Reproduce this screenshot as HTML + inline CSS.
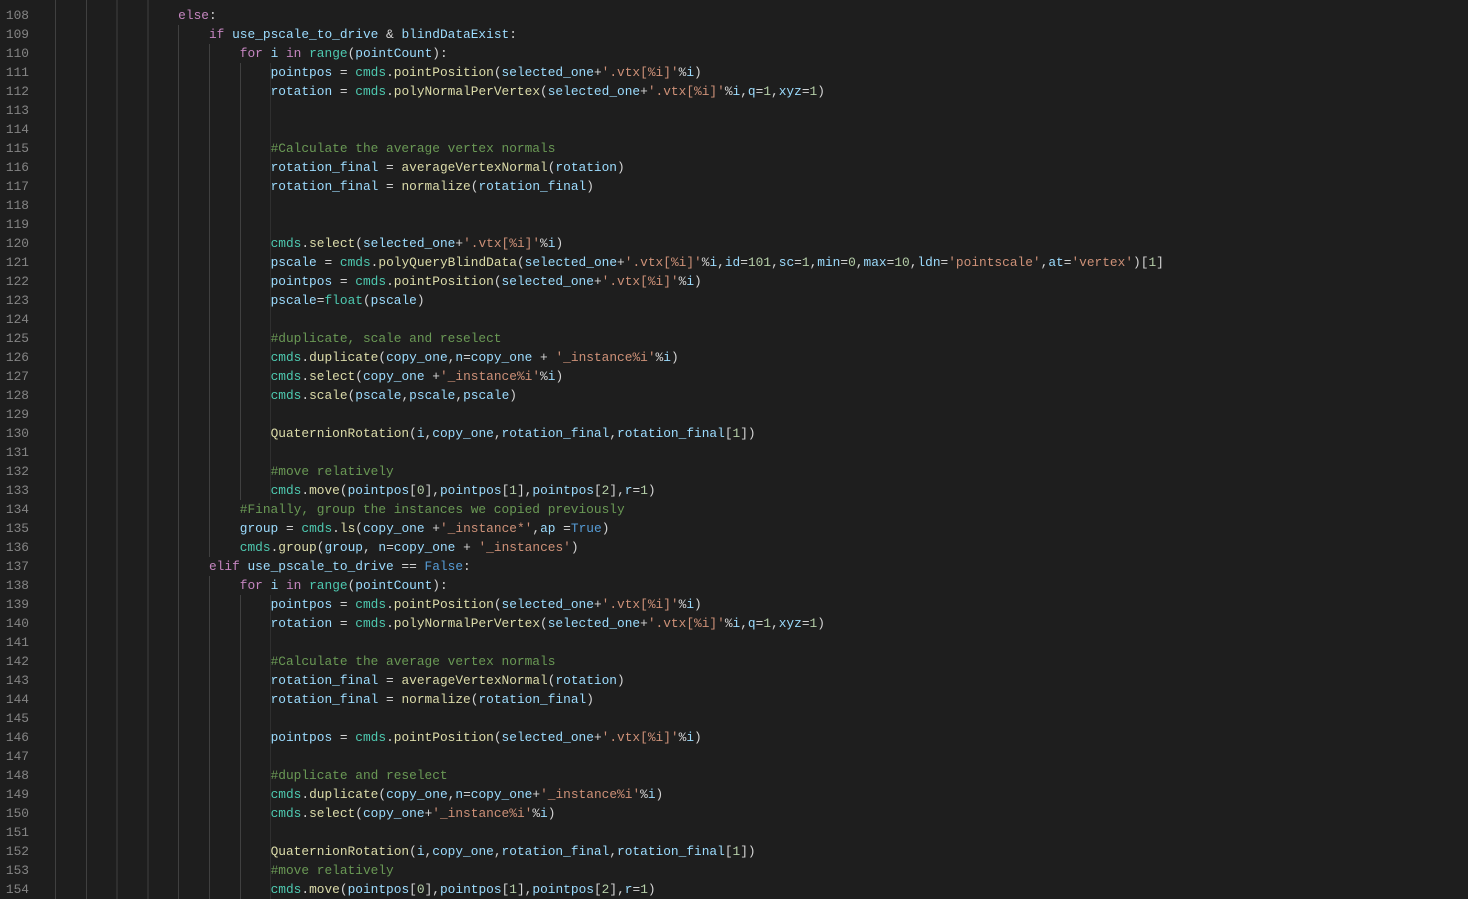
<!DOCTYPE html>
<html><head><meta charset="utf-8"><style>
html,body{margin:0;padding:0;background:#1e1e1e;width:1468px;height:897px;overflow:hidden}
.l{position:absolute;left:0;height:19px;width:1468px;font:12.833px/19px "Liberation Mono",monospace;color:#d4d4d4;white-space:pre}
.n{position:absolute;left:0;width:29px;text-align:right;color:#858585}
.g{position:absolute;left:55px;top:0;height:19px;background:repeating-linear-gradient(to right,#404040 0 1px,transparent 1px 30.8px)}
.c0{position:absolute;left:55px;top:0}
.k{color:#c586c0}.b{color:#569cd6}.t{color:#4ec9b0}.f{color:#dcdcaa}.v{color:#9cdcfe}.s{color:#ce9178}.m{color:#b5cea8}.c{color:#6a9955}
</style></head><body>
<script>
const L=[
[107,16,''],
[108,16,'<span class=k>else</span>:'],
[109,20,'<span class=k>if</span> <span class=v>use_pscale_to_drive</span> &amp; <span class=v>blindDataExist</span>:'],
[110,24,'<span class=k>for</span> <span class=v>i</span> <span class=k>in</span> <span class=t>range</span>(<span class=v>pointCount</span>):'],
[111,28,'P'],
[112,28,'R'],
[113,28,''],[114,28,''],
[115,28,'<span class=c>#Calculate the average vertex normals</span>'],
[116,28,'<span class=v>rotation_final</span> = <span class=f>averageVertexNormal</span>(<span class=v>rotation</span>)'],
[117,28,'<span class=v>rotation_final</span> = <span class=f>normalize</span>(<span class=v>rotation_final</span>)'],
[118,28,''],[119,28,''],
[120,28,'<span class=t>cmds</span>.<span class=f>select</span>(<span class=v>selected_one</span>+<span class=s>\'.vtx[%i]\'</span>%<span class=v>i</span>)'],
[121,28,'<span class=v>pscale</span> = <span class=t>cmds</span>.<span class=f>polyQueryBlindData</span>(<span class=v>selected_one</span>+<span class=s>\'.vtx[%i]\'</span>%<span class=v>i</span>,<span class=v>id</span>=<span class=m>101</span>,<span class=v>sc</span>=<span class=m>1</span>,<span class=v>min</span>=<span class=m>0</span>,<span class=v>max</span>=<span class=m>10</span>,<span class=v>ldn</span>=<span class=s>\'pointscale\'</span>,<span class=v>at</span>=<span class=s>\'vertex\'</span>)[<span class=m>1</span>]'],
[122,28,'P'],
[123,28,'<span class=v>pscale</span>=<span class=t>float</span>(<span class=v>pscale</span>)'],
[124,28,''],
[125,28,'<span class=c>#duplicate, scale and reselect</span>'],
[126,28,'<span class=t>cmds</span>.<span class=f>duplicate</span>(<span class=v>copy_one</span>,<span class=v>n</span>=<span class=v>copy_one</span> + <span class=s>\'_instance%i\'</span>%<span class=v>i</span>)'],
[127,28,'<span class=t>cmds</span>.<span class=f>select</span>(<span class=v>copy_one</span> +<span class=s>\'_instance%i\'</span>%<span class=v>i</span>)'],
[128,28,'<span class=t>cmds</span>.<span class=f>scale</span>(<span class=v>pscale</span>,<span class=v>pscale</span>,<span class=v>pscale</span>)'],
[129,28,''],
[130,28,'Q'],
[131,28,''],
[132,28,'<span class=c>#move relatively</span>'],
[133,28,'M'],
[134,24,'<span class=c>#Finally, group the instances we copied previously</span>'],
[135,24,'<span class=v>group</span> = <span class=t>cmds</span>.<span class=f>ls</span>(<span class=v>copy_one</span> +<span class=s>\'_instance*\'</span>,<span class=v>ap</span> =<span class=b>True</span>)'],
[136,24,'<span class=t>cmds</span>.<span class=f>group</span>(<span class=v>group</span>, <span class=v>n</span>=<span class=v>copy_one</span> + <span class=s>\'_instances\'</span>)'],
[137,20,'<span class=k>elif</span> <span class=v>use_pscale_to_drive</span> == <span class=b>False</span>:'],
[138,24,'<span class=k>for</span> <span class=v>i</span> <span class=k>in</span> <span class=t>range</span>(<span class=v>pointCount</span>):'],
[139,28,'P'],
[140,28,'R'],
[141,28,''],
[142,28,'<span class=c>#Calculate the average vertex normals</span>'],
[143,28,'<span class=v>rotation_final</span> = <span class=f>averageVertexNormal</span>(<span class=v>rotation</span>)'],
[144,28,'<span class=v>rotation_final</span> = <span class=f>normalize</span>(<span class=v>rotation_final</span>)'],
[145,28,''],
[146,28,'P'],
[147,28,''],
[148,28,'<span class=c>#duplicate and reselect</span>'],
[149,28,'<span class=t>cmds</span>.<span class=f>duplicate</span>(<span class=v>copy_one</span>,<span class=v>n</span>=<span class=v>copy_one</span>+<span class=s>\'_instance%i\'</span>%<span class=v>i</span>)'],
[150,28,'<span class=t>cmds</span>.<span class=f>select</span>(<span class=v>copy_one</span>+<span class=s>\'_instance%i\'</span>%<span class=v>i</span>)'],
[151,28,''],
[152,28,'Q'],
[153,28,'<span class=c>#move relatively</span>'],
[154,28,'M']
];
const T={
P:'<span class=v>pointpos</span> = <span class=t>cmds</span>.<span class=f>pointPosition</span>(<span class=v>selected_one</span>+<span class=s>\'.vtx[%i]\'</span>%<span class=v>i</span>)',
R:'<span class=v>rotation</span> = <span class=t>cmds</span>.<span class=f>polyNormalPerVertex</span>(<span class=v>selected_one</span>+<span class=s>\'.vtx[%i]\'</span>%<span class=v>i</span>,<span class=v>q</span>=<span class=m>1</span>,<span class=v>xyz</span>=<span class=m>1</span>)',
Q:'<span class=f>QuaternionRotation</span>(<span class=v>i</span>,<span class=v>copy_one</span>,<span class=v>rotation_final</span>,<span class=v>rotation_final</span>[<span class=m>1</span>])',
M:'<span class=t>cmds</span>.<span class=f>move</span>(<span class=v>pointpos</span>[<span class=m>0</span>],<span class=v>pointpos</span>[<span class=m>1</span>],<span class=v>pointpos</span>[<span class=m>2</span>],<span class=v>r</span>=<span class=m>1</span>)'
};
let h='';
for(const [n,ind,code] of L){
 const top=6+(n-108)*19;
 const c=T[code]||code;
 h+=`<div class=l style="top:${top}px"><span class=n>${n}</span><span class=g style="width:${ind*7.7}px"></span><span class=c0>${' '.repeat(ind)}${c}</span></div>`;
}
document.write(h);
</script>
</body></html>
